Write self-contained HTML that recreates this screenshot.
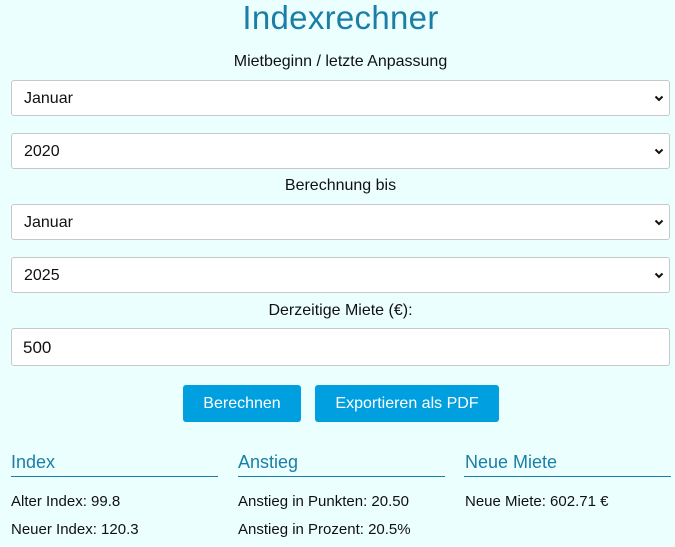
<!DOCTYPE html>
<html><head><meta charset="utf-8"><style>
body{margin:0;width:675px;height:547px;background:#ebffff;font-family:"Liberation Sans",sans-serif;position:relative;overflow:hidden;color:#111}
.a{position:absolute}
h1{position:absolute;top:-1px;left:0;width:681px;margin:0;text-align:center;font-weight:400;font-size:33px;color:#1b7ea6;letter-spacing:0.3px}
.lbl{left:0;width:681px;text-align:center;font-size:16px}
.sel{left:11px;width:657px;height:34px;background:#fff;border:1px solid #c8c8c8;border-radius:3px;font-size:16px;line-height:36px;box-sizing:content-box}
.sel span{position:absolute;left:12px}
.sel svg{position:absolute;right:5px;top:14px}
.btn{top:385px;height:37px;background:#009fe0;color:#fff;border-radius:3px;font-size:16px;line-height:37px;text-align:center}
.h{font-size:18px;color:#1b7ea6;top:452px}
.ln{top:476px;height:1px;background:#1b7ea6;width:207px}
.t{font-size:15px}
</style></head><body>
<h1>Indexrechner</h1>
<div class="a lbl" style="top:53px">Mietbeginn / letzte Anpassung</div>
<div class="a sel" style="top:80px"><span>Januar</span><svg width="10" height="7" viewBox="0 0 10 7"><path d="M1.5 1.5L5 5L8.5 1.5" stroke="#111" stroke-width="2" fill="none"/></svg></div>
<div class="a sel" style="top:133px"><span>2020</span><svg width="10" height="7" viewBox="0 0 10 7"><path d="M1.5 1.5L5 5L8.5 1.5" stroke="#111" stroke-width="2" fill="none"/></svg></div>
<div class="a lbl" style="top:177px">Berechnung bis</div>
<div class="a sel" style="top:204px"><span>Januar</span><svg width="10" height="7" viewBox="0 0 10 7"><path d="M1.5 1.5L5 5L8.5 1.5" stroke="#111" stroke-width="2" fill="none"/></svg></div>
<div class="a sel" style="top:257px"><span>2025</span><svg width="10" height="7" viewBox="0 0 10 7"><path d="M1.5 1.5L5 5L8.5 1.5" stroke="#111" stroke-width="2" fill="none"/></svg></div>
<div class="a lbl" style="top:302px">Derzeitige Miete (€):</div>
<div class="a sel" style="top:328px;height:36px;line-height:38px;font-size:17px"><span style="left:11px">500</span></div>
<div class="a btn" style="left:183px;width:118px">Berechnen</div>
<div class="a btn" style="left:315px;width:184px">Exportieren als PDF</div>
<div class="a h" style="left:11px">Index</div>
<div class="a h" style="left:238px">Anstieg</div>
<div class="a h" style="left:465px">Neue Miete</div>
<div class="a ln" style="left:11px"></div>
<div class="a ln" style="left:238px"></div>
<div class="a ln" style="left:464px"></div>
<div class="a t" style="left:11px;top:493px">Alter Index: 99.8</div>
<div class="a t" style="left:11px;top:521px">Neuer Index: 120.3</div>
<div class="a t" style="left:238px;top:493px">Anstieg in Punkten: 20.50</div>
<div class="a t" style="left:238px;top:521px">Anstieg in Prozent: 20.5%</div>
<div class="a t" style="left:465px;top:493px">Neue Miete: 602.71 €</div>
</body></html>
